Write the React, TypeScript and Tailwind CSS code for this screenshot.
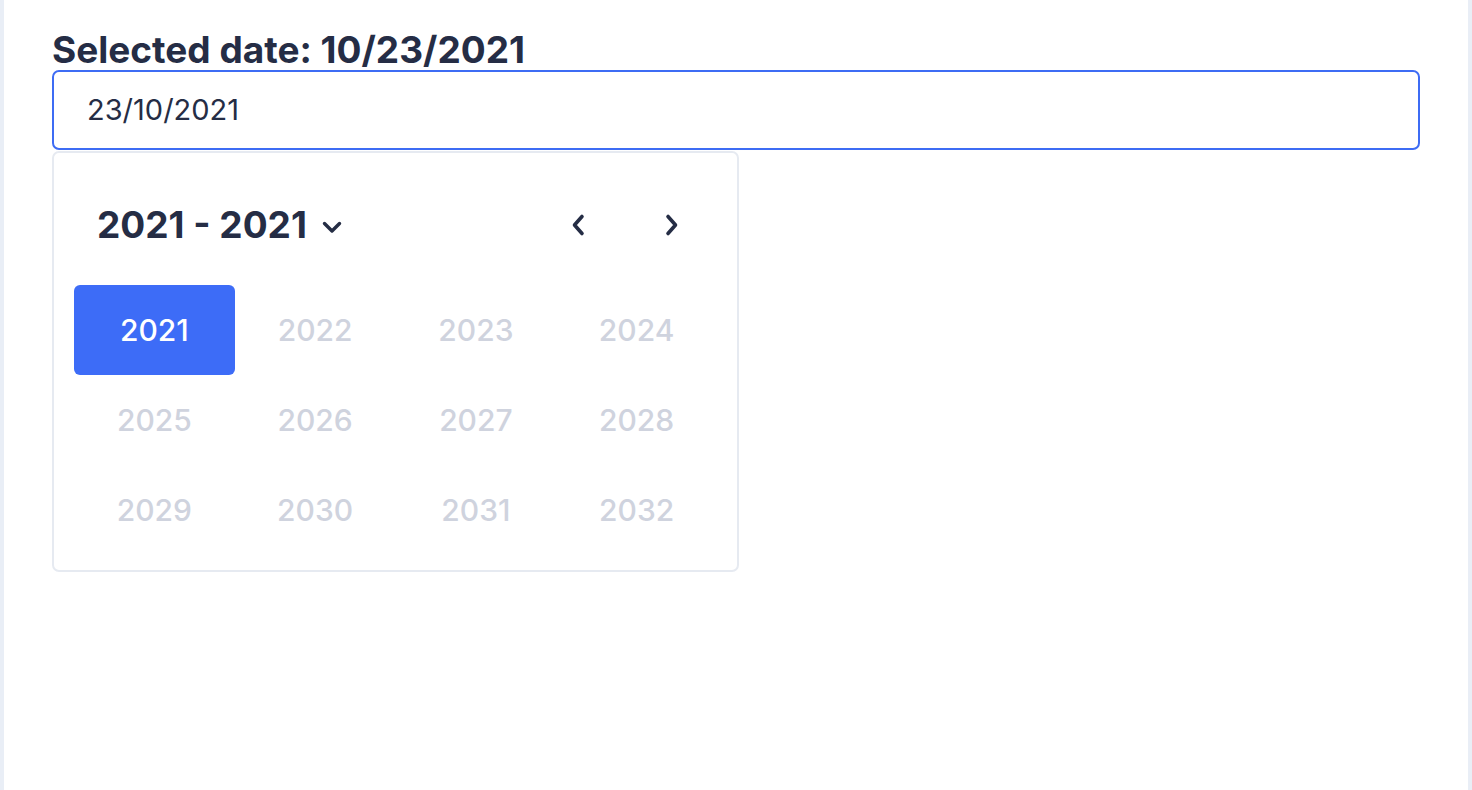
import React from "react"

const years = [2021,2022,2023,2024,2025,2026,2027,2028,2029,2030,2031,2032]

export default function App(){
  const selected = 2021

  return(
    <div className="flex h-[790px] w-full bg-white" style={{fontFamily:"Inter, 'Noto Sans', sans-serif"}}>
      <div className="w-[4px] bg-[#e9eef6]" />

      <div className="flex-1 bg-white px-[48px] pt-[30px] text-[#252d45]">
        <h2 className="text-[37px] font-bold leading-[40px]">Selected date: 10/23/2021</h2>

        <div className="flex h-[80px] items-center rounded-[7px] border-2 border-[#3e6cf4] pl-[33px] text-[29px]">
          23/10/2021
        </div>

        {/* year picker */}
        <div className="mt-[1px] h-[421px] w-[687px] rounded-[7px] border-2 border-[#e6eaf1] bg-white px-[20px] pt-[48px]">
          <div className="flex h-[48px] items-center pl-[23px]">
            <span className="text-[37px] font-bold">2021 - 2021</span>
            <svg className="ml-[14px] mt-[3px]" width="22" height="14" viewBox="0 0 22 14" fill="none">
              <path d="M3.5 3.5l7.5 7.5 7.5-7.5" stroke="#252d45" strokeWidth="3.4" strokeLinecap="round" strokeLinejoin="round"/>
            </svg>
            <div className="ml-auto flex items-center">
              <button className="ml-[2px] flex h-[40px] w-[48px] items-center justify-center">
                <svg width="16" height="24" viewBox="0 0 16 24" fill="none">
                  <path d="M12 3.5L4.5 12l7.5 8.5" stroke="#252d45" strokeWidth="3.6" strokeLinecap="round" strokeLinejoin="round"/>
                </svg>
              </button>
              <button className="ml-[46px] mr-[21px] flex h-[40px] w-[48px] items-center justify-center">
                <svg width="16" height="24" viewBox="0 0 16 24" fill="none">
                  <path d="M4 3.5l7.5 8.5L4 20.5" stroke="#252d45" strokeWidth="3.6" strokeLinecap="round" strokeLinejoin="round"/>
                </svg>
              </button>
            </div>
          </div>

          <div className="mt-[36px] grid grid-cols-4">
            {years.map(y=>(
              <div
                key={y}
                className={y===selected
                  ? "flex h-[90px] items-center justify-center rounded-[6px] bg-[#3d6cf7] text-[30px] font-medium text-white"
                  : "flex h-[90px] items-center justify-center text-[30px] font-medium text-[#cfd3de]"}
              >
                {y}
              </div>
            ))}
          </div>
        </div>
      </div>

      <div className="w-[4px] bg-[#e9eef6]" />
    </div>
  )
}
